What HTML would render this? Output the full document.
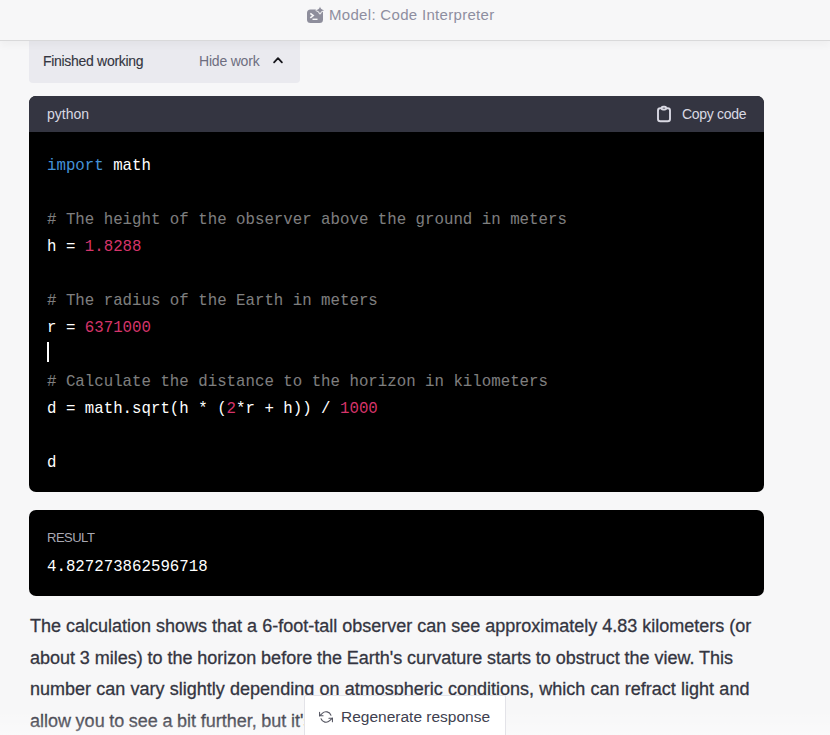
<!DOCTYPE html>
<html><head><meta charset="utf-8">
<style>
*{box-sizing:border-box;margin:0;padding:0}
html,body{width:830px;height:735px;overflow:hidden;background:#f7f7f8;font-family:"Liberation Sans",sans-serif;position:relative}
.hdr{position:absolute;left:0;top:0;width:830px;height:41px;background:#f7f7f8;border-bottom:1px solid #d9d9da;z-index:5;box-shadow:0 5px 7px rgba(0,0,0,0.03)}
.hdr .t{position:absolute;left:329px;top:5px;font-size:15px;letter-spacing:0.31px;line-height:20px;color:#8e8ea0;white-space:nowrap}
.hdr svg{position:absolute;left:306px;top:4px}
.fw{position:absolute;left:29px;top:30px;width:271px;height:53px;background:#eaeaef;border-radius:0 0 4px 4px}
.fw .a{position:absolute;left:14px;top:22px;letter-spacing:-0.3px;font-size:14px;line-height:18px;color:#343541;white-space:nowrap;-webkit-text-stroke:0.12px #343541}
.fw .b{position:absolute;left:170px;top:22px;letter-spacing:-0.2px;font-size:14px;line-height:18px;color:#6e6e80;white-space:nowrap}
.fw svg{position:absolute;left:242px;top:25px}
.code{position:absolute;left:29px;top:96px;width:735px;height:396px;background:#000;border-radius:7px;overflow:hidden}
.code .h{height:36px;background:#343541;position:relative}
.code .h .l{position:absolute;left:18px;top:9px;font-size:14px;line-height:18px;color:#d9d9e3;white-space:nowrap}
.code .h .r{position:absolute;left:653px;top:9px;letter-spacing:-0.3px;font-size:14px;line-height:18px;color:#d9d9e3;white-space:nowrap}
.code .h svg{position:absolute;left:626px;top:8px}
pre{position:absolute;left:18px;top:57px;font-family:"Liberation Mono",monospace;font-size:15.75px;line-height:27px;color:#fff;white-space:pre}
.k{color:#4492d8}.n{color:#d6346a}.c{color:hsla(0,0%,100%,.5)}
.cur{display:inline-block;width:2px;height:20px;background:#fff;vertical-align:-3px}
.res{position:absolute;left:29px;top:510px;width:735px;height:86px;background:#000;border-radius:7px}
.res .l{position:absolute;left:18px;top:20px;font-size:13px;letter-spacing:-0.5px;line-height:16px;color:#a8a8b3}
.res pre{left:18px;top:43.5px}
.p{position:absolute;left:30px;top:611px;width:800px;font-size:18px;line-height:31.5px;color:#343541;white-space:nowrap;-webkit-text-stroke:0.3px #343541}
.grad{position:absolute;left:0;top:686px;width:830px;height:170px;background:linear-gradient(180deg,rgba(255,255,255,0) 13.94%,#fff 54.73%)}
.regen{position:absolute;left:304px;top:695px;width:202px;height:50px;background:#fff;border:1px solid #e3e3e8;border-radius:2px}
.regen .t{position:absolute;left:36px;top:11px;font-size:15.5px;line-height:20px;color:#40414f;white-space:nowrap}
.regen svg{position:absolute;left:14px;top:13.5px}
</style></head>
<body>
<div class="hdr">
  <svg width="20" height="20" viewBox="0 0 20 20"><rect x="1" y="5.5" width="16" height="13.5" rx="3.5" fill="#8e8e9c"/><path d="M4.3 9.3L7.2 11.6L4.3 13.9" stroke="#f7f7f8" stroke-width="1.6" fill="none"/><rect x="6.5" y="14.6" width="5" height="1.4" fill="#f7f7f8"/><path d="M14 2.4Q14.6 5.6 18.2 6.2Q14.6 6.8 14 10Q13.4 6.8 9.8 6.2Q13.4 5.6 14 2.4Z" fill="#8e8e9c" stroke="#f7f7f8" stroke-width="1.6" paint-order="stroke"/></svg>
  <div class="t">Model: Code Interpreter</div>
</div>
<div class="fw">
  <div class="a">Finished working</div>
  <div class="b">Hide work</div>
  <svg width="14" height="10" viewBox="0 0 14 10"><path d="M3.1 7.3L7 3.1L10.9 7.3" stroke="#17171c" stroke-width="1.8" stroke-linecap="round" stroke-linejoin="round" fill="none"/></svg>
</div>
<div class="code">
  <div class="h">
    <div class="l">python</div>
    <svg width="18" height="20" viewBox="0 0 18 20"><rect x="3" y="4.2" width="12" height="13.1" rx="2.3" stroke="#d9d9e3" stroke-width="1.9" fill="none"/><rect x="6.7" y="2.7" width="4.4" height="2.8" rx="1.3" stroke="#d9d9e3" stroke-width="1.9" fill="#343541"/></svg>
    <div class="r">Copy code</div>
  </div>
<pre><span class="k">import</span> math

<span class="c"># The height of the observer above the ground in meters</span>
h = <span class="n">1.8288</span>

<span class="c"># The radius of the Earth in meters</span>
r = <span class="n">6371000</span>
<span class="cur"></span>
<span class="c"># Calculate the distance to the horizon in kilometers</span>
d = math.sqrt(h * (<span class="n">2</span>*r + h)) / <span class="n">1000</span>

d</pre>
</div>
<div class="res">
  <div class="l">RESULT</div>
<pre>4.827273862596718</pre>
</div>
<div class="p"><div>The calculation shows that a 6-foot-tall observer can see approximately 4.83 kilometers (or</div><div style="word-spacing:-0.17px">about 3 miles) to the horizon before the Earth's curvature starts to obstruct the view. This</div><div style="word-spacing:0.25px">number can vary slightly depending on atmospheric conditions, which can refract light and</div><div style="word-spacing:-0.4px">allow you to see a bit further, but it's a good approximation.</div></div>
<div class="grad"></div>
<div class="regen">
  <svg width="14" height="14" viewBox="0 0 24 24" fill="none" stroke="#52535f" stroke-width="1.8" stroke-linecap="round" stroke-linejoin="round"><polyline points="1 4 1 10 7 10"/><polyline points="23 20 23 14 17 14"/><path d="M20.49 9A9 9 0 0 0 5.64 5.64L1 10m22 4l-4.64 4.36A9 9 0 0 1 3.51 15"/></svg>
  <div class="t">Regenerate response</div>
</div>
</body></html>
